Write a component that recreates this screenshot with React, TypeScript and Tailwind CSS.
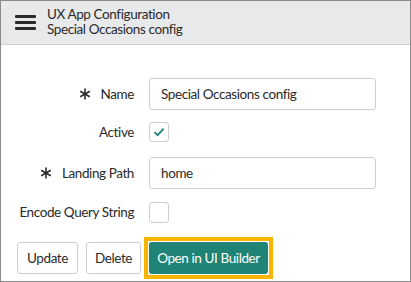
import React from "react";

const font = { fontFamily: '"Lato", "Liberation Sans", sans-serif' };

function Star() {
  return (
    <svg width="12" height="12" viewBox="0 0 12 12" className="mr-[10px]">
      <g stroke="#2a2a2a" strokeWidth="1.6" strokeLinecap="butt">
        <line x1="6" y1="0.5" x2="6" y2="11.5" />
        <line x1="1.2" y1="3.2" x2="10.8" y2="8.8" />
        <line x1="1.2" y1="8.8" x2="10.8" y2="3.2" />
      </g>
    </svg>
  );
}

export default function App() {
  return (
    <div
      className="w-[411px] h-[282px] border border-[#8a8a8a] bg-white text-[#2a2a2a] overflow-hidden flex flex-col text-[13.5px] tracking-[-0.4px]"
      style={font}
    >
      <div className="h-[44px] shrink-0 bg-[#e8e9ea] border-b border-[#cfcfcf] flex items-center">
        <div className="ml-[14px] w-[21px] flex flex-col gap-[3px]">
          <div className="h-[3px] bg-[#2b2b2b] rounded-[1px]" />
          <div className="h-[3px] bg-[#2b2b2b] rounded-[1px]" />
          <div className="h-[3px] bg-[#2b2b2b] rounded-[1px]" />
        </div>
        <div className="ml-[11px] leading-[15px] text-[#2a2a2a] -mt-[2px]">
          <div>UX App Configuration</div>
          <div>Special Occasions config</div>
        </div>
      </div>

      <div className="flex flex-col pt-[33px]">
        <div className="flex items-center h-[32px]">
          <div className="w-[133px] flex justify-end items-center">
            <Star />
            <span>Name</span>
          </div>
          <div className="ml-[15px] w-[227px] h-[32px] border border-[#cfcfcf] rounded-[3px] flex items-center pl-[11px]">
            Special Occasions config
          </div>
        </div>

        <div className="flex items-center h-[20px] mt-[12px]">
          <div className="w-[133px] text-right">Active</div>
          <div className="ml-[15px] w-[20px] h-[20px] border border-[#cfcfcf] rounded-[3px] flex items-center justify-center">
            <svg width="12" height="10" viewBox="0 0 12 10">
              <path d="M1.5 5.2 L4.6 8.2 L10.6 1.6" fill="none" stroke="#1f8476" strokeWidth="1.8" />
            </svg>
          </div>
        </div>

        <div className="flex items-center h-[32px] mt-[15px]">
          <div className="w-[133px] flex justify-end items-center">
            <Star />
            <span>Landing Path</span>
          </div>
          <div className="ml-[15px] w-[227px] h-[32px] border border-[#cfcfcf] rounded-[3px] flex items-center pl-[11px]">
            home
          </div>
        </div>

        <div className="flex items-center h-[21px] mt-[13px]">
          <div className="w-[133px] text-right">Encode Query String</div>
          <div className="ml-[15px] w-[20px] h-[21px] border border-[#cfcfcf] rounded-[3px]" />
        </div>

        <div className="flex items-center mt-[14px] ml-[16px]">
          <div className="h-[32px] w-[61px] border border-[#cfcfcf] rounded-[3px] flex items-center justify-center">
            Update
          </div>
          <div className="ml-[8px] h-[32px] w-[55px] border border-[#cfcfcf] rounded-[3px] flex items-center justify-center">
            Delete
          </div>
          <div className="ml-[3px] bg-[#f7b500] p-[4px]">
            <div className="bg-white p-[1px]">
              <div className="h-[32px] w-[119px] bg-[#1f8476] rounded-[3px] flex items-center justify-center text-white">
                Open in UI Builder
              </div>
            </div>
          </div>
        </div>
      </div>
    </div>
  );
}
